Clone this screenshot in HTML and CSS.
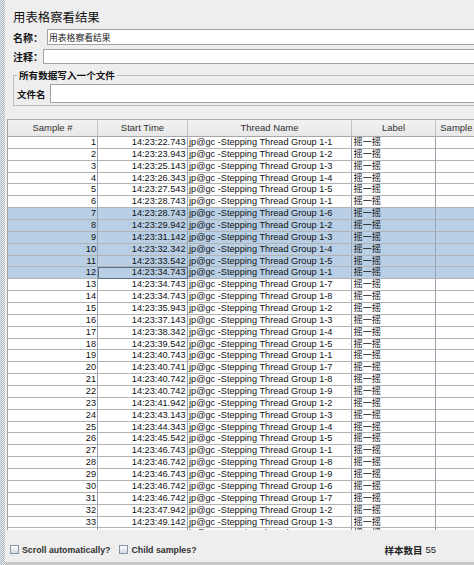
FILE: index.html
```html
<!DOCTYPE html>
<html lang="zh-CN">
<head>
<meta charset="utf-8">
<title>用表格察看结果</title>
<link rel="stylesheet" href="styles.css">
</head>
<body>
<div class="app">
  <div class="divider"></div>
  <div class="main">
    <div class="title">用表格察看结果</div>
    <div class="field-row name-row"><span class="field-label">名称：</span><div class="input">用表格察看结果</div></div>
    <div class="field-row comment-row"><span class="field-label">注释：</span><div class="input"></div></div>
    <fieldset class="group">
      <legend>所有数据写入一个文件</legend>
      <div class="file-row"><span class="field-label">文件名</span><div class="input"></div></div>
    </fieldset>
    <div class="pane">
      <div class="thead">
        <div class="th">Sample #</div>
        <div class="th">Start Time</div>
        <div class="th">Thread Name</div>
        <div class="th">Label</div>
        <div class="th">Sample Time(ms)</div>
      </div>
      <div class="tbody">
        <div class="row"><span class="c num">1</span><span class="c time">14:23:22.743</span><span class="c text">jp@gc -Stepping Thread Group 1-1</span><span class="c text lbl">摇一摇</span><span class="c"></span></div>
        <div class="row"><span class="c num">2</span><span class="c time">14:23:23.943</span><span class="c text">jp@gc -Stepping Thread Group 1-2</span><span class="c text lbl">摇一摇</span><span class="c"></span></div>
        <div class="row"><span class="c num">3</span><span class="c time">14:23:25.143</span><span class="c text">jp@gc -Stepping Thread Group 1-3</span><span class="c text lbl">摇一摇</span><span class="c"></span></div>
        <div class="row"><span class="c num">4</span><span class="c time">14:23:26.343</span><span class="c text">jp@gc -Stepping Thread Group 1-4</span><span class="c text lbl">摇一摇</span><span class="c"></span></div>
        <div class="row"><span class="c num">5</span><span class="c time">14:23:27.543</span><span class="c text">jp@gc -Stepping Thread Group 1-5</span><span class="c text lbl">摇一摇</span><span class="c"></span></div>
        <div class="row"><span class="c num">6</span><span class="c time">14:23:28.743</span><span class="c text">jp@gc -Stepping Thread Group 1-1</span><span class="c text lbl">摇一摇</span><span class="c"></span></div>
        <div class="row sel"><span class="c num">7</span><span class="c time">14:23:28.743</span><span class="c text">jp@gc -Stepping Thread Group 1-6</span><span class="c text lbl">摇一摇</span><span class="c"></span></div>
        <div class="row sel"><span class="c num">8</span><span class="c time">14:23:29.942</span><span class="c text">jp@gc -Stepping Thread Group 1-2</span><span class="c text lbl">摇一摇</span><span class="c"></span></div>
        <div class="row sel"><span class="c num">9</span><span class="c time">14:23:31.142</span><span class="c text">jp@gc -Stepping Thread Group 1-3</span><span class="c text lbl">摇一摇</span><span class="c"></span></div>
        <div class="row sel"><span class="c num">10</span><span class="c time">14:23:32.342</span><span class="c text">jp@gc -Stepping Thread Group 1-4</span><span class="c text lbl">摇一摇</span><span class="c"></span></div>
        <div class="row sel"><span class="c num">11</span><span class="c time">14:23:33.542</span><span class="c text">jp@gc -Stepping Thread Group 1-5</span><span class="c text lbl">摇一摇</span><span class="c"></span></div>
        <div class="row sel"><span class="c num">12</span><span class="c time focus">14:23:34.743</span><span class="c text">jp@gc -Stepping Thread Group 1-1</span><span class="c text lbl">摇一摇</span><span class="c"></span></div>
        <div class="row"><span class="c num">13</span><span class="c time">14:23:34.743</span><span class="c text">jp@gc -Stepping Thread Group 1-7</span><span class="c text lbl">摇一摇</span><span class="c"></span></div>
        <div class="row"><span class="c num">14</span><span class="c time">14:23:34.743</span><span class="c text">jp@gc -Stepping Thread Group 1-8</span><span class="c text lbl">摇一摇</span><span class="c"></span></div>
        <div class="row"><span class="c num">15</span><span class="c time">14:23:35.943</span><span class="c text">jp@gc -Stepping Thread Group 1-2</span><span class="c text lbl">摇一摇</span><span class="c"></span></div>
        <div class="row"><span class="c num">16</span><span class="c time">14:23:37.143</span><span class="c text">jp@gc -Stepping Thread Group 1-3</span><span class="c text lbl">摇一摇</span><span class="c"></span></div>
        <div class="row"><span class="c num">17</span><span class="c time">14:23:38.342</span><span class="c text">jp@gc -Stepping Thread Group 1-4</span><span class="c text lbl">摇一摇</span><span class="c"></span></div>
        <div class="row"><span class="c num">18</span><span class="c time">14:23:39.542</span><span class="c text">jp@gc -Stepping Thread Group 1-5</span><span class="c text lbl">摇一摇</span><span class="c"></span></div>
        <div class="row"><span class="c num">19</span><span class="c time">14:23:40.743</span><span class="c text">jp@gc -Stepping Thread Group 1-1</span><span class="c text lbl">摇一摇</span><span class="c"></span></div>
        <div class="row"><span class="c num">20</span><span class="c time">14:23:40.741</span><span class="c text">jp@gc -Stepping Thread Group 1-7</span><span class="c text lbl">摇一摇</span><span class="c"></span></div>
        <div class="row"><span class="c num">21</span><span class="c time">14:23:40.742</span><span class="c text">jp@gc -Stepping Thread Group 1-8</span><span class="c text lbl">摇一摇</span><span class="c"></span></div>
        <div class="row"><span class="c num">22</span><span class="c time">14:23:40.742</span><span class="c text">jp@gc -Stepping Thread Group 1-9</span><span class="c text lbl">摇一摇</span><span class="c"></span></div>
        <div class="row"><span class="c num">23</span><span class="c time">14:23:41.942</span><span class="c text">jp@gc -Stepping Thread Group 1-2</span><span class="c text lbl">摇一摇</span><span class="c"></span></div>
        <div class="row"><span class="c num">24</span><span class="c time">14:23:43.143</span><span class="c text">jp@gc -Stepping Thread Group 1-3</span><span class="c text lbl">摇一摇</span><span class="c"></span></div>
        <div class="row"><span class="c num">25</span><span class="c time">14:23:44.343</span><span class="c text">jp@gc -Stepping Thread Group 1-4</span><span class="c text lbl">摇一摇</span><span class="c"></span></div>
        <div class="row"><span class="c num">26</span><span class="c time">14:23:45.542</span><span class="c text">jp@gc -Stepping Thread Group 1-5</span><span class="c text lbl">摇一摇</span><span class="c"></span></div>
        <div class="row"><span class="c num">27</span><span class="c time">14:23:46.743</span><span class="c text">jp@gc -Stepping Thread Group 1-1</span><span class="c text lbl">摇一摇</span><span class="c"></span></div>
        <div class="row"><span class="c num">28</span><span class="c time">14:23:46.742</span><span class="c text">jp@gc -Stepping Thread Group 1-8</span><span class="c text lbl">摇一摇</span><span class="c"></span></div>
        <div class="row"><span class="c num">29</span><span class="c time">14:23:46.743</span><span class="c text">jp@gc -Stepping Thread Group 1-9</span><span class="c text lbl">摇一摇</span><span class="c"></span></div>
        <div class="row"><span class="c num">30</span><span class="c time">14:23:46.742</span><span class="c text">jp@gc -Stepping Thread Group 1-6</span><span class="c text lbl">摇一摇</span><span class="c"></span></div>
        <div class="row"><span class="c num">31</span><span class="c time">14:23:46.742</span><span class="c text">jp@gc -Stepping Thread Group 1-7</span><span class="c text lbl">摇一摇</span><span class="c"></span></div>
        <div class="row"><span class="c num">32</span><span class="c time">14:23:47.942</span><span class="c text">jp@gc -Stepping Thread Group 1-2</span><span class="c text lbl">摇一摇</span><span class="c"></span></div>
        <div class="row"><span class="c num">33</span><span class="c time">14:23:49.142</span><span class="c text">jp@gc -Stepping Thread Group 1-3</span><span class="c text lbl">摇一摇</span><span class="c"></span></div>
        <div class="row"><span class="c num">34</span><span class="c time">14:23:50.342</span><span class="c text">jp@gc -Stepping Thread Group 1-4</span><span class="c text lbl">摇一摇</span><span class="c"></span></div>
      </div>
    </div>
    <div class="footer">
      <label class="check"><span class="box"></span>Scroll automatically?</label>
      <label class="check"><span class="box"></span>Child samples?</label>
      <div class="count"><span class="count-label">样本数目</span><span class="count-value">55</span></div>
    </div>
    <div class="band"></div>
  </div>
</div>
</body>
</html>
```

FILE: styles.css
```css
* { box-sizing: border-box; }

html, body {
  margin: 0;
  padding: 0;
}

body {
  width: 474px;
  height: 565px;
  overflow: hidden;
  background: #eeeeee;
  font-family: "Liberation Sans", "Noto Sans CJK SC", sans-serif;
  color: #111;
}

.app {
  display: flex;
  height: 565px;
}

.divider {
  flex: none;
  width: 5px;
  background: repeating-conic-gradient(#a9b3bf 0 25%, #eef1f4 0 50%) 0 0 / 2px 2px;
}

.main {
  flex: 1;
  min-width: 0;
  display: flex;
  flex-direction: column;
  overflow: hidden;
}

.title {
  flex: none;
  height: 28px;
  padding: 7px 0 0 8px;
  font-family: "Noto Sans CJK SC", sans-serif;
  font-size: 12.4px;
  line-height: 21px;
  color: #111;
}

.field-row {
  flex: none;
  display: flex;
  margin: 0 -20px 0 8px;
}

.name-row {
  height: 16px;
  margin-top: 1px;
}

.comment-row {
  height: 15px;
  margin-top: 4px;
}

.field-label {
  flex: none;
  display: flex;
  align-items: center;
  font-family: "Noto Sans CJK SC", sans-serif;
  font-weight: 700;
  font-size: 10px;
  color: #111;
  white-space: nowrap;
}

.name-row .field-label { width: 34px; }
.comment-row .field-label { width: 30px; }

.input {
  flex: 1;
  display: flex;
  align-items: center;
  background: #fff;
  border: 1px solid #a3a3a3;
  padding-left: 1px;
  font-family: "Noto Sans CJK SC", sans-serif;
  font-size: 8.8px;
  color: #222;
  white-space: nowrap;
}

.group {
  flex: none;
  min-width: 0;
  margin: 5px -20px 0 8px;
  padding: 0 0 2px 3px;
  border: 1px solid #bcbcbc;
}

.group legend {
  padding: 0 2px;
  font-family: "Noto Sans CJK SC", sans-serif;
  font-weight: 700;
  font-size: 9.6px;
  line-height: 12px;
  color: #111;
}

.file-row {
  display: flex;
  height: 19px;
  margin-top: 3px;
}

.file-row .field-label {
  width: 33px;
  font-size: 9.5px;
}

.pane {
  flex: 1;
  min-height: 0;
  margin: 13px 0 0 2px;
  border-top: 1px solid #a9a9a9;
  border-left: 1px solid #a0a0a0;
  background: #fff;
  overflow: hidden;
}

.thead,
.row {
  display: grid;
  grid-template-columns: 90px 90px 164px 84px 84px;
}

.thead {
  height: 17px;
  background: linear-gradient(#f2f2f2, #e7e7e7);
}

.th {
  border-right: 1px solid #c3c3c3;
  border-bottom: 1px solid #a8a8a8;
  text-align: center;
  font-size: 9.5px;
  line-height: 16px;
  color: #333;
  white-space: nowrap;
  overflow: hidden;
}

.row {
  height: 11.86px;
  background: #fff;
}

.row.sel {
  background: #b8cfe5;
}

.c {
  border-right: 1px solid #97a3b1;
  border-bottom: 1px solid #b3b3b3;
  font-size: 9.2px;
  line-height: 10.86px;
  color: #111;
  white-space: nowrap;
  overflow: hidden;
}

.num,
.time {
  text-align: right;
  padding-right: 1px;
}

.time {
  padding-right: 1.5px;
}

.text {
  padding-left: 1px;
}

.lbl {
  padding-left: 1.5px;
}

.focus {
  outline: 1px solid #5e6e84;
  outline-offset: -1px;
}

.footer {
  flex: none;
  height: 32px;
  display: flex;
  align-items: center;
  padding: 7px 38px 0 5px;
}

.check {
  display: flex;
  align-items: center;
  gap: 3px;
  font-weight: 700;
  font-size: 8.8px;
  color: #333;
  white-space: nowrap;
}

.check + .check {
  margin-left: 9px;
}

.box {
  flex: none;
  width: 9px;
  height: 9px;
  border: 1px solid #8794a4;
  background: linear-gradient(#fdfdfe, #d2dbe5);
}

.count {
  margin-left: auto;
  display: flex;
  align-items: center;
  gap: 3px;
  font-size: 9.5px;
  color: #222;
  white-space: nowrap;
}

.count-label {
  font-family: "Noto Sans CJK SC", sans-serif;
  font-weight: 700;
}

.band {
  flex: none;
  height: 3px;
  background: #c8c8c8;
}
```
